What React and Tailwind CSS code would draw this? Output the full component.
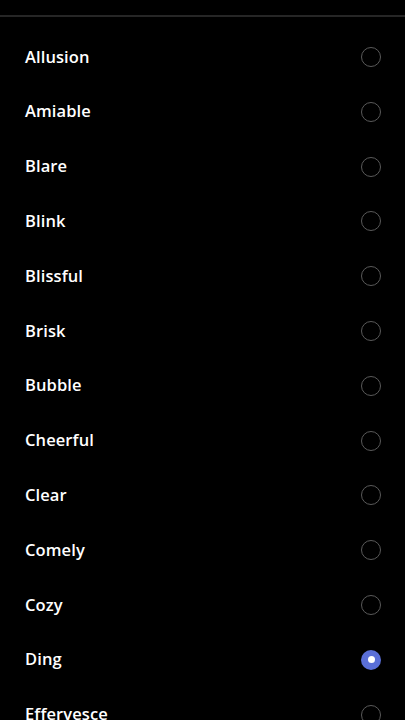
import React from 'react';

const sounds = [
  'Allusion',
  'Amiable',
  'Blare',
  'Blink',
  'Blissful',
  'Brisk',
  'Bubble',
  'Cheerful',
  'Clear',
  'Comely',
  'Cozy',
  'Ding',
  'Effervesce',
];

function Radio({ checked }) {
  if (checked) {
    return (
      <span className="w-5 h-5 rounded-full bg-[#5a6fd8] flex items-center justify-center">
        <span className="w-[7px] h-[7px] rounded-full bg-white" />
      </span>
    );
  }
  return <span className="w-5 h-5 rounded-full border-[1.5px] border-[#5a5a5a]" />;
}

export default function App() {
  return (
    <div className="w-[405px] h-[720px] bg-black overflow-hidden font-['Open_Sans',sans-serif]">
      <div className="h-[15px]" />
      <div className="h-[2px] bg-[#262626]" />
      <ul className="pt-[12.6px]">
        {sounds.map((name) => (
          <li key={name} className="h-[54.8px] flex items-center justify-between pl-[25px] pr-[24px]">
            <span className="text-white text-[16.5px] font-semibold tracking-[0.1px]">{name}</span>
            <Radio checked={name === 'Ding'} />
          </li>
        ))}
      </ul>
    </div>
  );
}
